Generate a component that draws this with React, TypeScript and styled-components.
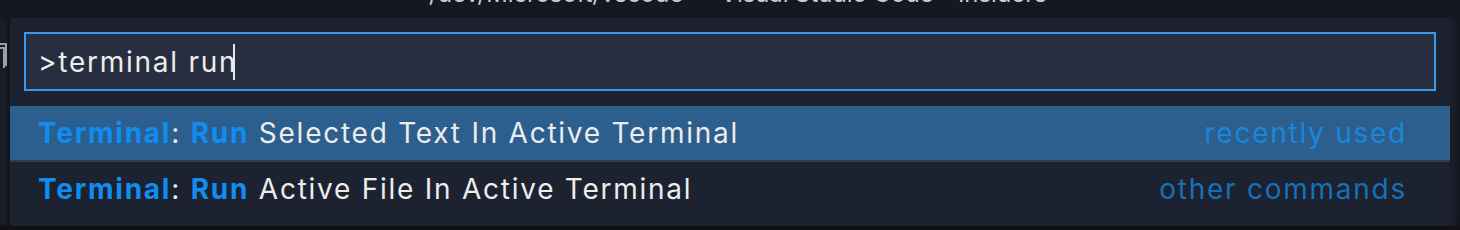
import styled, { createGlobalStyle } from "styled-components";

const GlobalStyle = createGlobalStyle`
  html, body {
    margin: 0;
    padding: 0;
    background: #0f1117;
    overflow: hidden;
  }
  body {
    font-family: Inter, "Open Sans", sans-serif;
  }
`;

const Window = styled.div`
  width: 1460px;
  height: 230px;
  display: flex;
  flex-direction: column;
  background: #0f1117;
`;

const TitleBar = styled.div`
  height: 18px;
  flex-shrink: 0;
  background: #141820;
  display: flex;
  justify-content: center;
  overflow: hidden;
`;

const TitleText = styled.span`
  margin-top: -21px;
  margin-left: 0;
  font-size: 23.8px;
  line-height: 30px;
  color: #c9ccd2;
  white-space: pre;
`;

const Body = styled.div`
  display: flex;
  height: 208px;
`;

const SideStrip = styled.div<{ $w: number }>`
  width: ${(p) => p.$w}px;
  flex-shrink: 0;
  background: #1a1e28;
  position: relative;
  overflow: hidden;
  box-shadow: inset -3px 0 4px rgba(0, 0, 0, 0.35);
`;

const SideIcon = styled.svg`
  position: absolute;
  left: -8px;
  top: 24px;
`;

const Widget = styled.div`
  flex: 1;
  background: #1d2230;
  display: flex;
  flex-direction: column;
  padding-top: 14px;
  letter-spacing: 1.75px;
`;

const InputBox = styled.div`
  margin: 0 14px 0 14px;
  height: 55px;
  border: 2px solid #3a99ea;
  background: #262e3f;
  display: flex;
  align-items: center;
  padding-left: 12px;
  font-size: 28px;
  color: #ececec;
`;

const Caret = styled.span`
  display: inline-block;
  width: 2px;
  height: 36px;
  background: #e6e6e6;
  margin-left: -4px;
`;

const List = styled.div`
  margin-top: 15px;
  display: flex;
  flex-direction: column;
`;

const Row = styled.div<{ $selected?: boolean }>`
  height: 54px;
  display: flex;
  align-items: center;
  justify-content: space-between;
  padding: 0 43px 0 28px;
  font-size: 28px;
  color: #ececec;
  background: ${(p) => (p.$selected ? "#2c5e8e" : "transparent")};
  border-bottom: ${(p) => (p.$selected ? "2px solid #363c48" : "none")};
`;

const Label = styled.span`
  white-space: pre;
`;

const Hl = styled.b`
  color: #0f8ef0;
  font-weight: 700;
`;

const Group = styled.span<{ $selected?: boolean }>`
  color: ${(p) => (p.$selected ? "#1a87da" : "#1670b8")};
`;

interface Item {
  rest: string;
  group: string;
  selected?: boolean;
}

const items: Item[] = [
  { rest: " Selected Text In Active Terminal", group: "recently used", selected: true },
  { rest: " Active File In Active Terminal", group: "other commands" },
];

function App() {
  return (
    <>
      <GlobalStyle />
      <Window>
        <TitleBar>
          <TitleText>~/dev/Microsoft/vscode — Visual Studio Code - Insiders</TitleText>
        </TitleBar>
        <Body>
          <SideStrip $w={10}>
            <SideIcon width="18" height="26" viewBox="0 0 18 26">
              <path d="M2 2h12v22" fill="none" stroke="#9a9ea6" strokeWidth="2" />
              <path d="M6 6h6v20" fill="none" stroke="#9a9ea6" strokeWidth="2" />
            </SideIcon>
          </SideStrip>
          <Widget>
            <InputBox>
              &gt;terminal run
              <Caret />
            </InputBox>
            <List>
              {items.map((it) => (
                <Row key={it.group} $selected={it.selected}>
                  <Label>
                    <Hl>Terminal</Hl>: <Hl>Run</Hl>
                    {it.rest}
                  </Label>
                  <Group $selected={it.selected}>{it.group}</Group>
                </Row>
              ))}
            </List>
          </Widget>
          <SideStrip $w={10} />
        </Body>
      </Window>
    </>
  );
}

export default App;
